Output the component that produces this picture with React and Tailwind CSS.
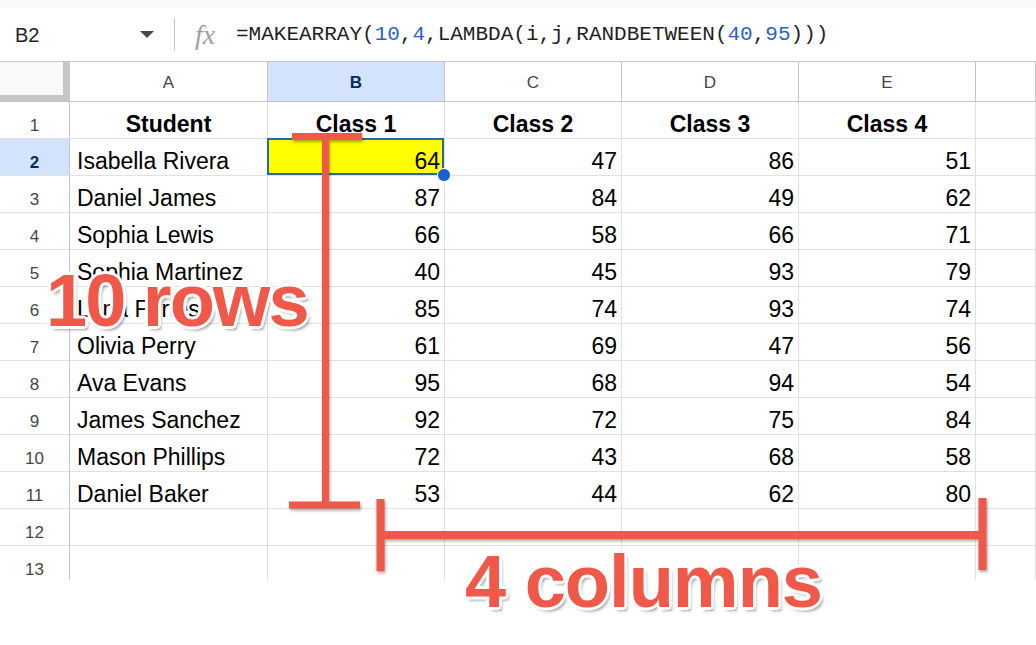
import React from "react";

const rows = [
  ["Isabella Rivera", 64, 47, 86, 51],
  ["Daniel James", 87, 84, 49, 62],
  ["Sophia Lewis", 66, 58, 66, 71],
  ["Sophia Martinez", 40, 45, 93, 79],
  ["Lena Fortes", 85, 74, 93, 74],
  ["Olivia Perry", 61, 69, 47, 56],
  ["Ava Evans", 95, 68, 94, 54],
  ["James Sanchez", 92, 72, 75, 84],
  ["Mason Phillips", 72, 43, 68, 58],
  ["Daniel Baker", 53, 44, 62, 80],
];

const GRID = "grid grid-cols-[70px_198px_177px_177px_177px_177px_60px]";

function RowHeader({ n, active }) {
  return (
    <div
      className={
        active
          ? "flex items-end justify-center border-b border-r border-b-[#e1e1e1] border-r-[#c4c7c5] bg-[#d3e3fd] pb-[4px] text-[17px] leading-[17px] font-bold text-[#0b2a5b]"
          : "flex items-end justify-center border-b border-r border-b-[#e1e1e1] border-r-[#c4c7c5] pb-[4px] text-[17px] leading-[17px] text-[#444746]"
      }
    >
      {n}
    </div>
  );
}

function Cell({ children, align, bold, selected }) {
  let cls =
    "relative flex items-end border-b border-r border-[#e1e1e1] pb-[2px] text-[23px] leading-[23px] whitespace-nowrap";
  if (align === "right") cls += " justify-end pr-[4px]";
  else if (align === "center") cls += " justify-center";
  else cls += " pl-[7px]";
  if (bold) cls += " font-bold";
  if (selected) cls += " bg-[#ffff00]";
  return (
    <div className={cls}>
      {children}
      {selected && (
        <>
          <div className="pointer-events-none absolute -left-px -top-px bottom-0 right-0 border-2 border-[#2a68a3]" />
          <div className="absolute -bottom-[7px] -right-[7px] z-10 h-[14px] w-[14px] rounded-full border border-white bg-[#1a5fd0]" />
        </>
      )}
    </div>
  );
}

const shadow =
  "[text-shadow:3px_0_0_#fff,-3px_0_0_#fff,0_3px_0_#fff,0_-3px_0_#fff,2px_2px_0_#fff,-2px_-2px_0_#fff,2px_-2px_0_#fff,-2px_2px_0_#fff,3px_4px_3px_rgba(0,0,0,0.35)]";

export default function App() {
  const blue = "text-[#2a62c8]";
  return (
    <div className="relative h-[645px] w-[1036px] overflow-hidden bg-white font-['Liberation_Sans',Arial,sans-serif] text-black">
      <div className="h-[8px] bg-[#f8fafd]" />
      <div className="flex h-[54px] items-center border-b border-[#c4c7c5] bg-white">
        <div className="flex w-[174px] items-center pl-[15px] pr-[20px]">
          <span className="flex-1 text-[20px] text-[#1f1f1f]">B2</span>
          <svg width="14" height="8" viewBox="0 0 14 8">
            <path d="M0 0h14L7 7z" fill="#444746" />
          </svg>
        </div>
        <div className="h-[33px] w-px bg-[#c4c7c5]" />
        <span className="ml-[20px] w-[41px] font-['Liberation_Serif',serif] text-[28px] leading-none italic text-[#a0a0a0]">
          fx
        </span>
        <span className="font-['Liberation_Mono',monospace] text-[21px] text-[#1f1f1f]">
          =MAKEARRAY(<span className={blue}>10</span>,<span className={blue}>4</span>
          ,LAMBDA(i,j,RANDBETWEEN(<span className={blue}>40</span>,
          <span className={blue}>95</span>)))
        </span>
      </div>

      <div className="h-[518px] overflow-hidden">
        <div className={GRID + " h-[40px]"}>
          <div className="border-b-[7px] border-r-[7px] border-[#c4c7c5] bg-[#f8f9fa]" />
          {["A", "B", "C", "D", "E", ""].map((l, i) => (
            <div
              key={i}
              className={
                i === 1
                  ? "flex items-center justify-center border-b border-r border-[#c4c7c5] bg-[#d3e3fd] pt-[2px] text-[17px] font-bold text-[#0b2a5b]"
                  : "flex items-center justify-center border-b border-r border-[#c4c7c5] pt-[2px] text-[17px] text-[#444746]"
              }
            >
              {l}
            </div>
          ))}
        </div>

        <div className={GRID + " h-[37px]"}>
          <RowHeader n={1} />
          <Cell align="center" bold>Student</Cell>
          <Cell align="center" bold>Class 1</Cell>
          <Cell align="center" bold>Class 2</Cell>
          <Cell align="center" bold>Class 3</Cell>
          <Cell align="center" bold>Class 4</Cell>
          <Cell />
        </div>

        {rows.map((r, i) => (
          <div key={i} className={GRID + " h-[37px]"}>
            <RowHeader n={i + 2} active={i === 0} />
            <Cell>{r[0]}</Cell>
            <Cell align="right" selected={i === 0}>{r[1]}</Cell>
            <Cell align="right">{r[2]}</Cell>
            <Cell align="right">{r[3]}</Cell>
            <Cell align="right">{r[4]}</Cell>
            <Cell />
          </div>
        ))}

        {[12, 13].map((n) => (
          <div key={n} className={GRID + " h-[37px]"}>
            <RowHeader n={n} />
            <Cell />
            <Cell />
            <Cell />
            <Cell />
            <Cell />
            <Cell />
          </div>
        ))}
      </div>

      <svg
        className="pointer-events-none absolute left-0 top-0 drop-shadow-[1px_2px_1.5px_rgba(0,0,0,0.35)]"
        width="1036"
        height="645"
      >
        <g stroke="#f0584a" strokeWidth="7" fill="none">
          <path d="M292 136.5H362 M325.5 136V505 M289 505H360" />
          <path d="M380.5 499V571 M380 535H982 M982.5 498V570" strokeWidth="8" />
        </g>
      </svg>

      <div
        className={
          "pointer-events-none absolute left-[46px] top-[264px] whitespace-nowrap text-[74px] leading-none font-bold tracking-[-2px] text-[#f0584a] " +
          shadow
        }
      >
        10 rows
      </div>
      <div
        className={
          "pointer-events-none absolute left-[465px] top-[545px] whitespace-nowrap text-[74px] leading-none font-bold tracking-[-1px] text-[#f0584a] " +
          shadow
        }
      >
        4 columns
      </div>
    </div>
  );
}
